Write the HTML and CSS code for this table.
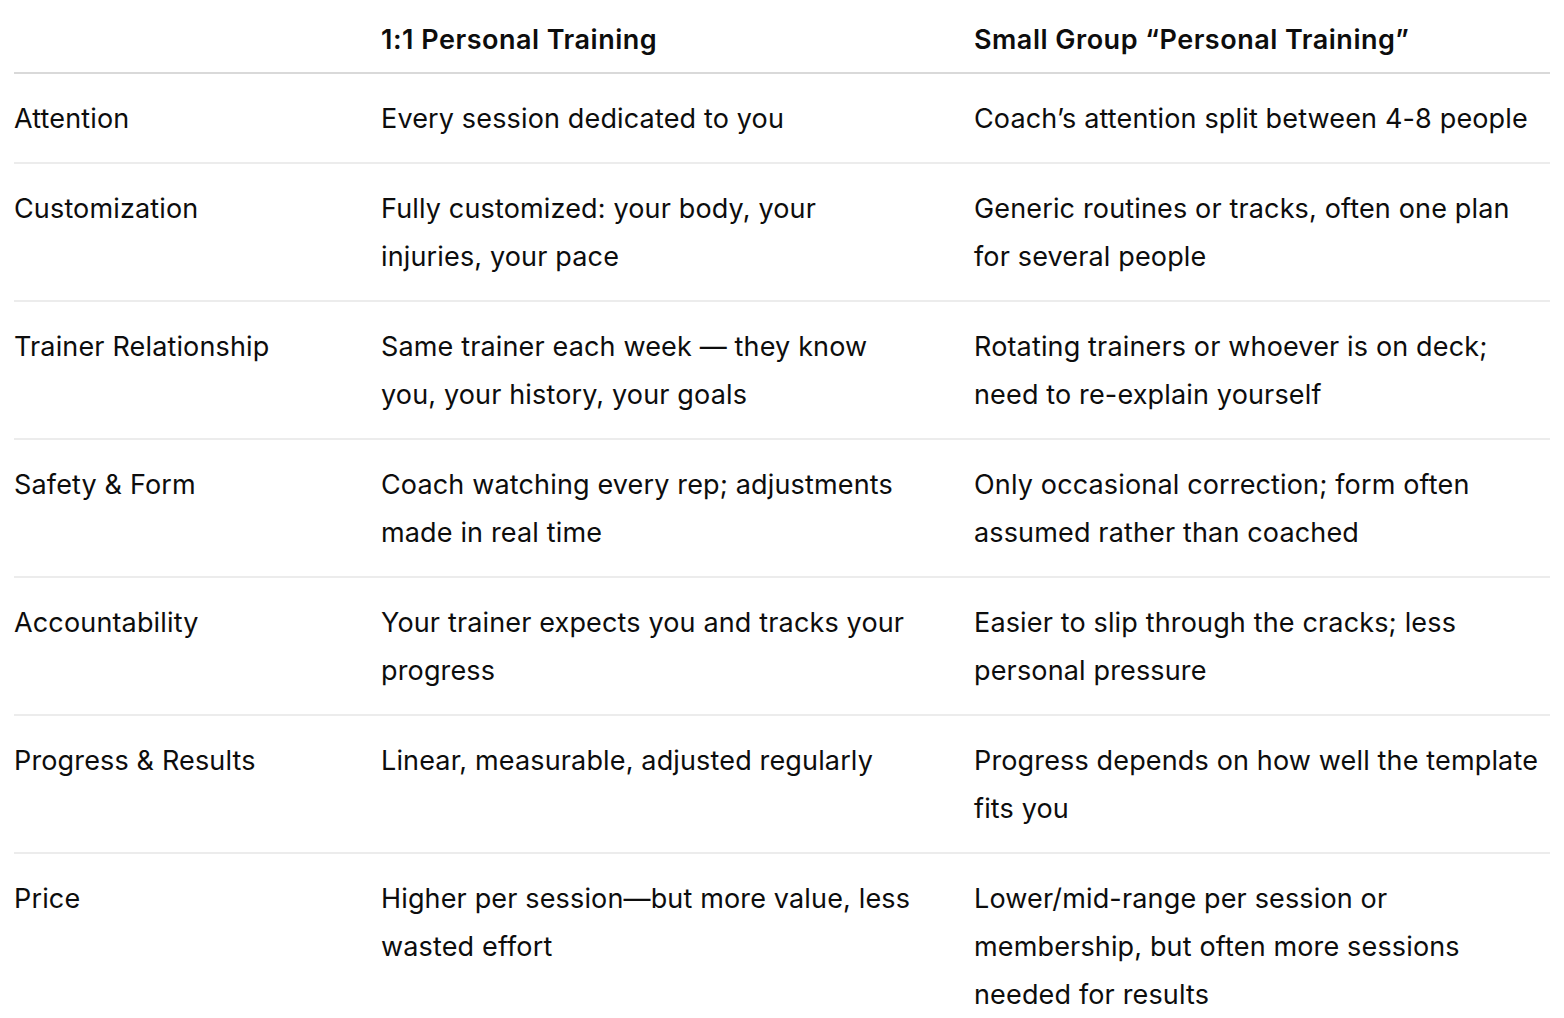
FILE: index.html
```html
<!DOCTYPE html>
<html>
<head>
<meta charset="utf-8">
<link rel="stylesheet" href="styles.css">
</head>
<body>
<table class="cmp">
  <colgroup>
    <col class="c1"><col class="c2"><col class="c3">
  </colgroup>
  <thead>
    <tr><th></th><th>1:1 Personal Training</th><th>Small Group “Personal Training”</th></tr>
  </thead>
  <tbody>
    <tr><td>Attention</td><td>Every session dedicated to you</td><td>Coach’s attention split between 4-8 people</td></tr>
    <tr><td>Customization</td><td>Fully customized: your body, your injuries, your pace</td><td>Generic routines or tracks, often one plan for several people</td></tr>
    <tr><td>Trainer Relationship</td><td>Same trainer each week — they know you, your history, your goals</td><td>Rotating trainers or whoever is on deck; need to re-explain yourself</td></tr>
    <tr><td>Safety &amp; Form</td><td>Coach watching every rep; adjustments made in real time</td><td>Only occasional correction; form often assumed rather than coached</td></tr>
    <tr><td>Accountability</td><td>Your trainer expects you and tracks your progress</td><td>Easier to slip through the cracks; less personal pressure</td></tr>
    <tr><td>Progress &amp; Results</td><td>Linear, measurable, adjusted regularly</td><td>Progress depends on how well the template fits you</td></tr>
    <tr><td>Price</td><td>Higher per session—but more value, less wasted effort</td><td>Lower/mid-range per session or membership, but often more sessions needed for results</td></tr>
  </tbody>
</table>
</body>
</html>
```
FILE: styles.css
```css
html, body {
  margin: 0;
  padding: 0;
  background: #ffffff;
}
body {
  padding: 0 14px;
  font-family: Inter, "Noto Sans", sans-serif;
  font-size: 27px;
  line-height: 48px;
  letter-spacing: 0.15px;
  color: #0d0d0d;
}
.cmp {
  width: 1536px;
  border-collapse: collapse;
  table-layout: fixed;
}
.c1 { width: 335px; }
.c2 { width: 593px; }
.c3 { width: 608px; }
.cmp th, .cmp td {
  text-align: left;
  vertical-align: top;
  padding: 20px 32px;
}
.cmp th:nth-child(2), .cmp td:nth-child(2) { padding-right: 26px; }
.cmp th:first-child, .cmp td:first-child { padding-left: 0; }
.cmp th:last-child, .cmp td:last-child { padding-right: 0; }
.cmp th {
  font-weight: 600;
  letter-spacing: 0.5px;
  padding-top: 16px;
  padding-bottom: 8px;
  border-bottom: 2px solid #d9d9d9;
}
.cmp td {
  font-weight: 400;
  padding-top: 21px;
  padding-bottom: 19px;
}
.cmp tbody tr { border-bottom: 2px solid #ececec; }
```
